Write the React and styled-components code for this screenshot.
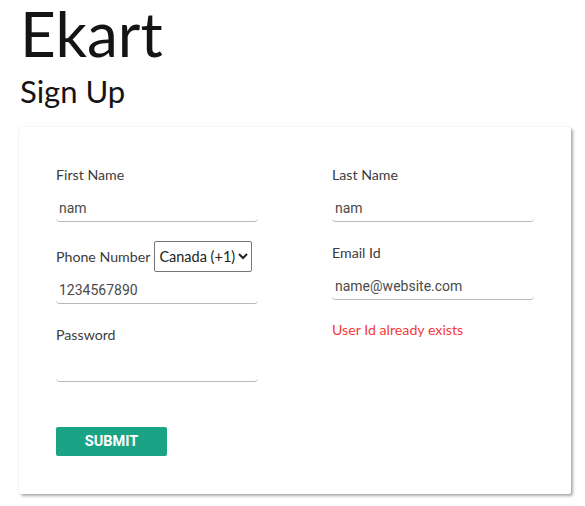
import React from 'react';
import styled, { createGlobalStyle } from 'styled-components';

const GlobalStyle = createGlobalStyle`
  body {
    margin: 0;
    background: #fff;
    font-family: Lato, "Open Sans", sans-serif;
  }
`

const Page = styled.div`
  padding: 2px 14px 12px 19px;
`

const Brand = styled.h1`
  margin: 0 0 11px 1px;
  font-size: 62px;
  line-height: 62px;
  font-weight: 400;
  color: #141414;
`

const Heading = styled.h2`
  margin: 0 0 20px 1px;
  font-size: 31px;
  line-height: 32px;
  font-weight: 400;
  color: #141414;
`

const Card = styled.form`
  box-sizing: border-box;
  width: 552px;
  padding: 38px 0 38px 37px;
  display: grid;
  grid-template-columns: 276px 1fr;
  background: #fff;
  border-radius: 2px;
  box-shadow: 2px 2px 3px rgba(0, 0, 0, 0.32), 0 0 2px rgba(0, 0, 0, 0.1);
`

const Column = styled.div`
  display: flex;
  flex-direction: column;
  align-items: flex-start;
`

const Field = styled.div`
  display: flex;
  flex-direction: column;
  margin-bottom: ${props => props.last ? '0' : '21px'};
`

const LabelRow = styled.div`
  display: flex;
  align-items: center;
  height: ${props => props.tall ? '31px' : '20px'};
  margin-top: ${props => props.tall ? '-2px' : '0'};
  margin-bottom: ${props => props.tall ? '5px' : '10px'};
`

const Label = styled.label`
  font-size: 14.2px;
  line-height: 20px;
  color: #3c3c3c;
`

const CountrySelect = styled.select`
  margin-left: 4px;
  height: 31px;
  padding: 0;
  font-family: Lato, sans-serif;
  font-size: 14.5px;
  color: #222;
  background: #fff;
  border: 1px solid #767676;
  border-radius: 2px;
  &:focus {
    outline: none;
  }
`

const TextInput = styled.input`
  box-sizing: border-box;
  width: 202px;
  height: 27px;
  padding: 0 3px;
  border: none;
  border-bottom: 1px solid #b8b8b8;
  border-radius: 4px;
  font-family: Roboto, sans-serif;
  font-size: 14px;
  color: #4a4a4a;
  background: transparent;
  &:focus {
    outline: none;
  }
`

const ErrorText = styled.div`
  margin-top: 20px;
  font-size: 14.2px;
  line-height: 20px;
  color: #f53a3a;
`

const SubmitButton = styled.button`
  margin-top: 45px;
  width: 111px;
  height: 29px;
  border: none;
  border-radius: 2px;
  background-color: #1ba385;
  color: #fff;
  font-family: Roboto, sans-serif;
  font-size: 14.5px;
  font-weight: 700;
  cursor: pointer;
`

export default function App() {
  return (
    <Page>
      <GlobalStyle />
      <Brand>Ekart</Brand>
      <Heading>Sign Up</Heading>
      <Card onSubmit={e => e.preventDefault()}>
        <Column>
          <Field>
            <LabelRow><Label>First Name</Label></LabelRow>
            <TextInput defaultValue="nam" />
          </Field>
          <Field>
            <LabelRow tall>
              <Label>Phone Number</Label>
              <CountrySelect defaultValue="ca">
                <option value="ca">Canada (+1)</option>
                <option value="in">India (+91)</option>
                <option value="us">USA (+1)</option>
              </CountrySelect>
            </LabelRow>
            <TextInput defaultValue="1234567890" />
          </Field>
          <Field last>
            <LabelRow><Label>Password</Label></LabelRow>
            <TextInput type="password" />
          </Field>
          <SubmitButton type="submit">SUBMIT</SubmitButton>
        </Column>
        <Column>
          <Field>
            <LabelRow><Label>Last Name</Label></LabelRow>
            <TextInput defaultValue="nam" />
          </Field>
          <Field last>
            <LabelRow><Label>Email Id</Label></LabelRow>
            <TextInput defaultValue="name@website.com" />
          </Field>
          <ErrorText>User Id already exists</ErrorText>
        </Column>
      </Card>
    </Page>
  );
}
